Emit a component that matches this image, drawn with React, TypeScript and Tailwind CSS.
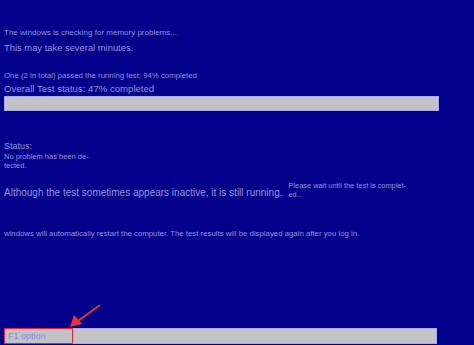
const txt = "text-[#9494dc]";

export default function App() {
  return (
    <div
      className="relative flex h-[345px] w-[474px] flex-col overflow-hidden bg-[#00008a] pl-[4px]"
      style={{ fontFamily: '"Liberation Sans", Arial, sans-serif' }}
    >
      <p className={`mt-[28px] text-[8px] leading-[10px] ${txt}`}>
        The windows is checking for memory problems...
      </p>
      <p className={`mt-[4px] text-[9.4px] leading-[12px] ${txt}`}>This may take several minutes.</p>

      <p className={`mt-[17px] text-[7.8px] leading-[10px] ${txt}`}>
        One (2 in total) passed the running test: 94% completed
      </p>
      <p className={`mt-[2px] text-[9.6px] leading-[12px] ${txt}`}>Overall Test status: 47% completed</p>
      <div className="mt-[1px] h-[15px] w-[435px] border border-[#a9a9f0] bg-[#c3c3c6]" />

      <p className={`mt-[30px] text-[9px] leading-[11px] ${txt}`}>Status:</p>
      <p className={`text-[7.5px] leading-[9px] ${txt}`}>
        No problem has been de-
        <br />
        tected.
      </p>

      <div className="mt-[11px] flex items-start gap-[6px]">
        <p className={`mt-[6px] text-[10px] leading-[12px] ${txt}`}>
          Although the test sometimes appears inactive, it is still running.
        </p>
        <p className={`text-[7.4px] leading-[9px] ${txt}`}>
          Please wait until the test is complet-
          <br />
          ed...
        </p>
      </div>

      <p className={`mt-[30px] text-[7.8px] leading-[9px] ${txt}`}>
        windows will automatically restart the computer. The test results will be displayed again after you log in.
      </p>

      <div className="relative mt-auto mb-[1px] flex h-[16px] w-[433px] items-center border border-[#a9a9f0] bg-[#c3c3c6]">
        <span className="pl-[3px] text-[9px] leading-[10px] text-[#8a8ae0]">F1 option</span>
        <div className="absolute left-[-1px] top-[-1px] h-[16px] w-[69px] border-[1.5px] border-[#e0283c]" />
      </div>

      <svg className="absolute left-0 top-0" width="474" height="345" viewBox="0 0 474 345">
        <line x1="100" y1="305" x2="78" y2="321" stroke="#f03030" strokeWidth="2" />
        <polygon points="70,327 74,315 82,324" fill="#f03030" />
      </svg>
    </div>
  );
}
